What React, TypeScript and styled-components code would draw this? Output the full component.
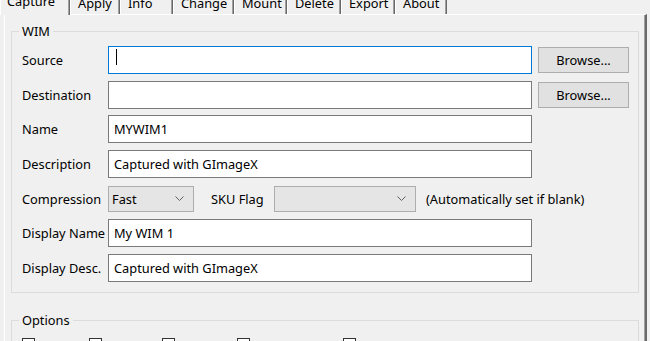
import styled, { createGlobalStyle } from "styled-components";

const GlobalStyle = createGlobalStyle`
  html, body {
    margin: 0;
    padding: 0;
    background: #f0f0f0;
    overflow: hidden;
  }
  body {
    font-family: "Segoe UI", "Noto Sans", "Liberation Sans", sans-serif;
    font-size: 12.8px;
    color: #000;
  }
`;

const Window = styled.div`
  width: 650px;
  height: 341px;
  overflow: hidden;
`;

const TabStrip = styled.div`
  display: flex;
  align-items: flex-start;
  height: 22px;
  margin-top: -8px;
  position: relative;
  z-index: 1;
`;

const Tab = styled.div<{ $w: number; $active?: boolean }>`
  box-sizing: border-box;
  width: ${(p) => p.$w}px;
  height: ${(p) => (p.$active ? 23 : 20)}px;
  margin-top: ${(p) => (p.$active ? 0 : 2)}px;
  padding: 1px 0 0 ${(p) => (p.$active ? 6 : 7)}px;
  border-left: 1px solid #ffffff;
  border-right: 1px solid #696969;
  box-shadow: inset -1px 0 0 #a0a0a0;
  background: #f0f0f0;
  line-height: 16px;
  white-space: nowrap;
`;

const Panel = styled.div`
  box-sizing: border-box;
  width: 643px;
  height: 400px;
  margin-left: 4px;
  padding: 8px 6px 0 6px;
  border-top: 1px solid #ffffff;
  border-left: 1px solid #ffffff;
  border-right: 2px solid #696969;
  box-shadow: inset -1px 0 0 #a0a0a0;
`;

const Group = styled.fieldset`
  margin: 0;
  min-width: 0;
  padding: 7px 9px 10px 10px;
  border: 1px solid #dcdcdc;
  & + & {
    margin-top: 19px;
  }
`;

const Legend = styled.legend`
  padding: 0 3px;
  margin-left: -3px;
  line-height: 16px;
`;

const Form = styled.div`
  display: flex;
  flex-direction: column;
  gap: 6.7px;
`;

const Row = styled.div`
  display: flex;
  align-items: center;
  height: 28px;
`;

const Label = styled.span<{ $w?: number }>`
  flex-shrink: 0;
  width: ${(p) => p.$w ?? 86}px;
  white-space: nowrap;
`;

const TextBox = styled.div<{ $focused?: boolean }>`
  box-sizing: border-box;
  display: flex;
  align-items: center;
  width: 424px;
  height: 28px;
  padding-left: 5px;
  background: #ffffff;
  border: 1px solid ${(p) => (p.$focused ? "#0078d7" : "#7a7a7a")};
  white-space: nowrap;
`;

const Caret = styled.span`
  align-self: flex-start;
  width: 1px;
  height: 16px;
  margin: 2px 0 0 2px;
  background: #000;
`;

const Button = styled.button`
  box-sizing: border-box;
  width: 91px;
  height: 26px;
  margin-left: 6px;
  padding: 0;
  background: #e1e1e1;
  border: 1px solid #adadad;
  font: inherit;
  color: #000;
`;

const Combo = styled.div<{ $w: number }>`
  box-sizing: border-box;
  display: flex;
  align-items: center;
  justify-content: space-between;
  width: ${(p) => p.$w}px;
  height: 26px;
  padding: 0 9px 0 3px;
  background: #e5e5e5;
  border: 1px solid #adadad;
`;

const Note = styled.span`
  margin-left: 10px;
  white-space: nowrap;
`;

const SkuLabel = styled(Label)`
  margin-left: 17px;
`;

const Checks = styled.div`
  display: flex;
  align-items: flex-start;
  padding-top: 3px;
`;

const CheckItem = styled.label<{ $w?: number }>`
  display: flex;
  align-items: flex-start;
  gap: 5px;
  width: ${(p) => (p.$w ? `${p.$w}px` : "auto")};
  line-height: 16px;
  white-space: nowrap;
`;

const CheckBox = styled.span`
  box-sizing: border-box;
  flex-shrink: 0;
  width: 13px;
  height: 13px;
  background: #fff;
  border: 1px solid #333;
`;

function Chevron() {
  return (
    <svg width="9" height="5" viewBox="0 0 9 5">
      <polyline points="0.5,0.5 4.5,4.5 8.5,0.5" fill="none" stroke="#606060" strokeWidth="1" />
    </svg>
  );
}

const tabs = [
  { name: "Capture", w: 70 },
  { name: "Apply", w: 50 },
  { name: "Info", w: 53 },
  { name: "Change", w: 61 },
  { name: "Mount", w: 53 },
  { name: "Delete", w: 54 },
  { name: "Export", w: 54 },
  { name: "About", w: 52 },
];

const options = [
  { name: "Verify", w: 67 },
  { name: "Check", w: 73 },
  { name: "Boot", w: 75 },
  { name: "No RP Fix", w: 106 },
  { name: "Use Config File" },
];

export default function App() {
  return (
    <Window>
      <GlobalStyle />
      <TabStrip>
        {tabs.map((t, i) => (
          <Tab key={t.name} $w={t.w} $active={i === 0}>
            {t.name}
          </Tab>
        ))}
      </TabStrip>
      <Panel>
        <Group>
          <Legend>WIM</Legend>
          <Form>
            <Row>
              <Label>Source</Label>
              <TextBox $focused>
                <Caret />
              </TextBox>
              <Button>Browse...</Button>
            </Row>
            <Row>
              <Label>Destination</Label>
              <TextBox />
              <Button>Browse...</Button>
            </Row>
            <Row>
              <Label>Name</Label>
              <TextBox>MYWIM1</TextBox>
            </Row>
            <Row>
              <Label>Description</Label>
              <TextBox>Captured with GImageX</TextBox>
            </Row>
            <Row>
              <Label>Compression</Label>
              <Combo $w={86}>
                <span>Fast</span>
                <Chevron />
              </Combo>
              <SkuLabel $w={63}>SKU Flag</SkuLabel>
              <Combo $w={142}>
                <span />
                <Chevron />
              </Combo>
              <Note>(Automatically set if blank)</Note>
            </Row>
            <Row>
              <Label>Display Name</Label>
              <TextBox>My WIM 1</TextBox>
            </Row>
            <Row>
              <Label>Display Desc.</Label>
              <TextBox>Captured with GImageX</TextBox>
            </Row>
          </Form>
        </Group>
        <Group>
          <Legend>Options</Legend>
          <Checks>
            {options.map((o) => (
              <CheckItem key={o.name} $w={o.w}>
                <CheckBox />
                {o.name}
              </CheckItem>
            ))}
          </Checks>
        </Group>
      </Panel>
    </Window>
  );
}
